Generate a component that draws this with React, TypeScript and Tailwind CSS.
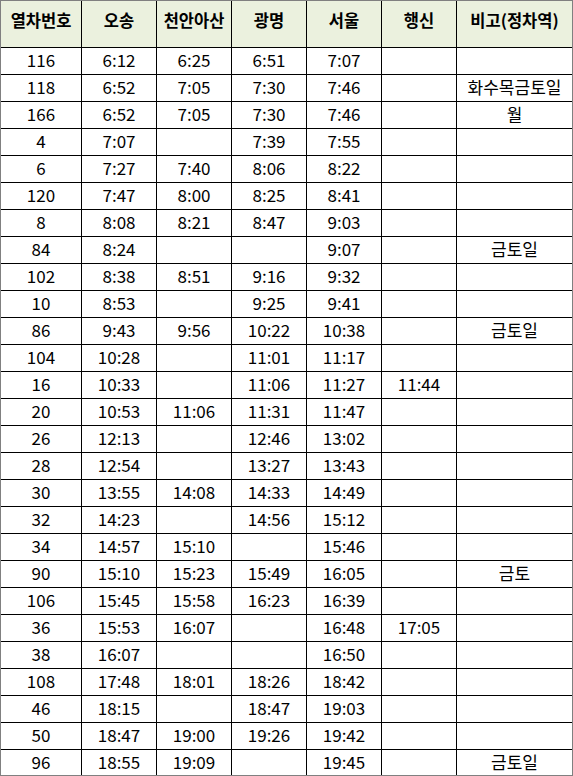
import React from "react";

type Row = [string, string, string, string, string, string, string];

const rows: Row[] = [
  ["116", "6:12", "6:25", "6:51", "7:07", "", ""],
  ["118", "6:52", "7:05", "7:30", "7:46", "", "화수목금토일"],
  ["166", "6:52", "7:05", "7:30", "7:46", "", "월"],
  ["4", "7:07", "", "7:39", "7:55", "", ""],
  ["6", "7:27", "7:40", "8:06", "8:22", "", ""],
  ["120", "7:47", "8:00", "8:25", "8:41", "", ""],
  ["8", "8:08", "8:21", "8:47", "9:03", "", ""],
  ["84", "8:24", "", "", "9:07", "", "금토일"],
  ["102", "8:38", "8:51", "9:16", "9:32", "", ""],
  ["10", "8:53", "", "9:25", "9:41", "", ""],
  ["86", "9:43", "9:56", "10:22", "10:38", "", "금토일"],
  ["104", "10:28", "", "11:01", "11:17", "", ""],
  ["16", "10:33", "", "11:06", "11:27", "11:44", ""],
  ["20", "10:53", "11:06", "11:31", "11:47", "", ""],
  ["26", "12:13", "", "12:46", "13:02", "", ""],
  ["28", "12:54", "", "13:27", "13:43", "", ""],
  ["30", "13:55", "14:08", "14:33", "14:49", "", ""],
  ["32", "14:23", "", "14:56", "15:12", "", ""],
  ["34", "14:57", "15:10", "", "15:46", "", ""],
  ["90", "15:10", "15:23", "15:49", "16:05", "", "금토"],
  ["106", "15:45", "15:58", "16:23", "16:39", "", ""],
  ["36", "15:53", "16:07", "", "16:48", "17:05", ""],
  ["38", "16:07", "", "", "16:50", "", ""],
  ["108", "17:48", "18:01", "18:26", "18:42", "", ""],
  ["46", "18:15", "", "18:47", "19:03", "", ""],
  ["50", "18:47", "19:00", "19:26", "19:42", "", ""],
  ["96", "18:55", "19:09", "", "19:45", "", "금토일"],
];

const headers = ["열차번호", "오송", "천안아산", "광명", "서울", "행신", "비고(정차역)"];
const widths = ["w-[81px]", "w-[75px]", "w-[75px]", "w-[75px]", "w-[75px]", "w-[75px]", "w-[115px]"];

export default function App() {
  return (
    <div
      className="w-[573px] h-[776px] overflow-hidden border border-[#808080] bg-white text-black"
      style={{ fontFamily: '"Noto Sans CJK KR", "Noto Sans", sans-serif' }}
    >
      <table className="table-fixed border-separate border-spacing-0 w-[571px]">
        <colgroup>
          {widths.map((w, i) => (
            <col key={i} className={w} />
          ))}
        </colgroup>
        <thead>
          <tr>
            {headers.map((h, i) => (
              <th
                key={h}
                className={`h-[47px] p-0 pb-[8px] bg-[#ebf1de] border-b border-black text-center align-middle text-[16.5px] font-bold leading-none whitespace-nowrap ${
                  i < 6 ? "border-r" : ""
                }`}
              >
                {h}
              </th>
            ))}
          </tr>
        </thead>
        <tbody>
          {rows.map((r, ri) => {
            const last = ri === rows.length - 1;
            return (
              <tr key={ri}>
                {r.map((c, ci) => (
                  <td
                    key={ci}
                    className={`p-0 pb-[3px] text-center align-middle text-[17px] leading-none whitespace-nowrap border-black ${
                      last ? "h-[25px]" : "h-[27px] border-b"
                    } ${ci < 6 ? "border-r" : ""}`}
                  >
                    {c}
                  </td>
                ))}
              </tr>
            );
          })}
        </tbody>
      </table>
    </div>
  );
}
